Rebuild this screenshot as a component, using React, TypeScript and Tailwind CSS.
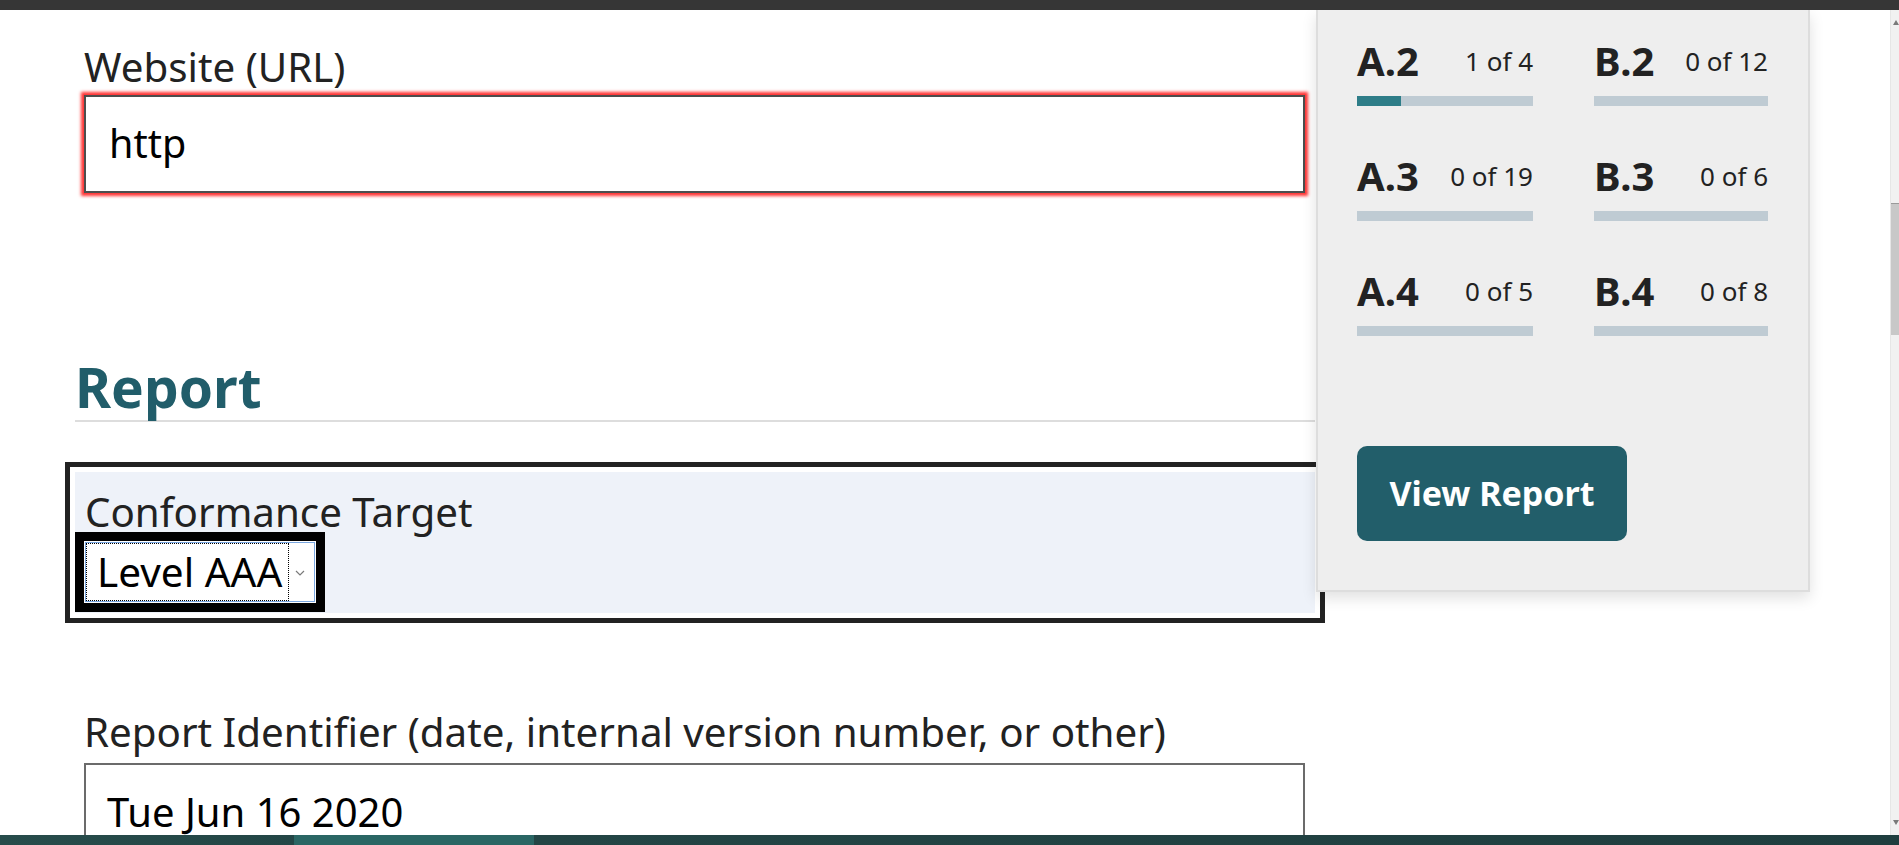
import * as React from 'react';

interface Progress {
  id: string;
  done: number;
  total: number;
}

const progress: Progress[] = [
  { id: 'A.2', done: 1, total: 4 },
  { id: 'B.2', done: 0, total: 12 },
  { id: 'A.3', done: 0, total: 19 },
  { id: 'B.3', done: 0, total: 6 },
  { id: 'A.4', done: 0, total: 5 },
  { id: 'B.4', done: 0, total: 8 },
];

const ProgressItem = ({ id, done, total }: Progress) => (
  <div>
    <div className="flex h-[54px] items-center justify-between">
      <span className="text-[40px] font-bold leading-[54px] text-[#222]">{id}</span>
      <span className="text-[26px] leading-[36px] text-[#222]">
        {done} of {total}
      </span>
    </div>
    <div className="mt-[8px] h-[10px] bg-[#bfcbd3]">
      <div className="h-full bg-[#2e7d88]" style={{ width: `${(done / total) * 100}%` }} />
    </div>
  </div>
);

const TextField = ({ label, value, invalid }: { label: string; value: string; invalid?: boolean }) => (
  <div className="ml-[19px] w-[1221px]">
    <div className="text-[40.3px] leading-[54px] text-[#222]">{label}</div>
    <div
      className={
        invalid
          ? 'mt-[1px] flex h-[98px] items-center border-2 border-[#4d4d4d] bg-white pl-[23px] text-[39.5px] text-black shadow-[0_0_3px_3px_rgba(255,40,40,0.95)]'
          : 'mt-[4px] flex h-[98px] items-center border-2 border-[#6b6b6b] bg-white pl-[21px] text-[40px] text-black'
      }
    >
      {value}
    </div>
  </div>
);

export default function App() {
  return (
    <div className="flex h-[845px] w-[1899px] flex-col overflow-hidden bg-white font-['Noto_Sans',sans-serif] text-[#222]">
      <div className="h-[10px] shrink-0 bg-[#363636]" />

      <div className="flex min-h-0 flex-1 overflow-hidden">
        <main className="relative flex-1">
          <div className="w-[1325px] pl-[65px] pt-[30px]">
            <TextField label="Website (URL)" value="http" invalid />

            <h2 className="ml-[10px] mt-[162px] w-[1240px] border-b-2 border-[#dddddd] pb-[1px] text-[55px] font-bold leading-[64px] text-[#215d6a]">
              Report
            </h2>

            <div className="mt-[40px] w-[1260px] border-[5px] border-[#222] bg-white p-[5px]">
              <div className="bg-[#eef2f9] pb-[11px] pl-[10px] pt-[13px]">
                <div className="text-[40.3px] leading-[54px] text-[#222]">Conformance Target</div>
                <div className="relative mt-[3px] flex h-[60px] w-[230px] items-center border border-[#7aa7e0] bg-white shadow-[0_0_0_1px_#ffffff,0_0_0_10px_#000000]">
                  <div className="absolute bottom-0 left-0 top-0 w-[203px] border border-dotted border-black" />
                  <span className="pl-[11px] text-[40.5px] leading-[52px] text-black">Level AAA</span>
                  <svg className="absolute right-[9px] top-[27px]" width="10" height="6" viewBox="0 0 10 6">
                    <path d="M1 1l4 4 4-4" fill="none" stroke="#7a7a7a" strokeWidth="1.2" />
                  </svg>
                </div>
              </div>
            </div>

            <div className="mt-[82px]">
              <TextField label="Report Identifier (date, internal version number, or other)" value="Tue Jun 16 2020" />
            </div>
          </div>

          <aside className="absolute left-[1316px] top-0 h-[582px] w-[494px] border-x-2 border-b-2 border-[#dddddd] bg-[#eeeeee] pl-[39px] pt-[24px] shadow-[0_6px_14px_rgba(0,0,0,0.12)]">
            <div className="grid grid-cols-[176px_174px] gap-x-[61px] gap-y-[43px]">
              {progress.map((p) => (
                <ProgressItem key={p.id} {...p} />
              ))}
            </div>
            <button className="mt-[110px] h-[95px] w-[270px] rounded-[10px] bg-[#225e6a] text-[34px] font-bold text-white">
              View Report
            </button>
          </aside>
        </main>

        <div className="relative w-[9px] shrink-0 border-l border-[#e6e6e6] bg-[#f1f1f1]">
          <svg className="absolute left-[2px] top-[10px]" width="6" height="5" viewBox="0 0 6 5">
            <path d="M3 0l3 5H0z" fill="#7a7a7a" />
          </svg>
          <div className="absolute left-0 right-0 top-[193px] h-[132px] border-t border-[#9a9a9a] bg-[#c8c8c8]" />
          <svg className="absolute bottom-[10px] left-[2px]" width="6" height="5" viewBox="0 0 6 5">
            <path d="M0 0h6L3 5z" fill="#7a7a7a" />
          </svg>
        </div>
      </div>

      <div className="flex h-[10px] shrink-0">
        <div className="w-[294px] bg-gradient-to-r from-[#274c4b] to-[#234646]" />
        <div className="w-[240px] bg-[#2a6664]" />
        <div className="flex-1 bg-gradient-to-r from-[#234545] to-[#1f3e3f]" />
      </div>
    </div>
  );
}
